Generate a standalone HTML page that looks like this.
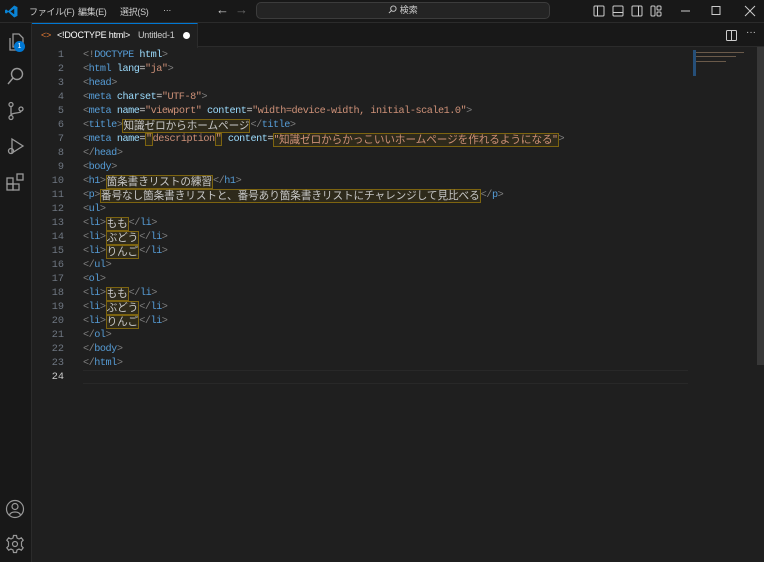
<!DOCTYPE html>
<html><head><meta charset="utf-8"><style>
*{margin:0;padding:0;box-sizing:border-box}
body{width:764px;height:562px;background:#1f1f1f;position:relative;overflow:hidden;font-family:"Liberation Sans","Noto Sans CJK JP",sans-serif;color:#ccc}
.tb{position:absolute;left:0;top:0;width:764px;height:23px;background:#181818;border-bottom:1px solid #2b2b2b}
.menu{position:absolute;top:5px;font-size:9px;color:#ccc;letter-spacing:-0.3px}
.search{position:absolute;left:256px;top:2px;width:294px;height:17px;border:1px solid #3c3c3c;border-radius:5px;background:#242424;font-size:9px;color:#ccc;text-align:center;line-height:15px}
.ab{position:absolute;left:0;top:23px;width:32px;height:539px;background:#181818;border-right:1px solid #2b2b2b}
.tabs{position:absolute;left:32px;top:23px;width:732px;height:24px;background:#181818;border-bottom:1px solid #2b2b2b}
.tab{position:absolute;left:0;top:0;width:166px;height:25px;background:#1f1f1f;border-top:1px solid #0078d4;border-right:1px solid #2b2b2b;font-size:9px;line-height:23px;color:#fff;letter-spacing:-0.2px}
.code{position:absolute;left:0;top:49px;font-family:"Liberation Mono","Noto Sans CJK JP",monospace;font-size:10.2px;letter-spacing:-0.48px}
.l{height:14px;line-height:14px;white-space:pre;position:relative}
.n{position:absolute;left:32px;width:32px;text-align:right;color:#6e7681;letter-spacing:0}
.c{position:absolute;left:83px;color:#d4d4d4}
.g{color:#808080}.t{color:#569cd6}.a{color:#9cdcfe}.s{color:#ce9178}
.j{font-size:10.6px;letter-spacing:-0.05px;font-family:"Noto Sans CJK JP",sans-serif;display:inline-block;line-height:12px;border:1px solid #7d6410;background:rgba(100,80,15,.22);vertical-align:top;color:#c8c8c8}
.js{color:#ce9178}
.q{border:1px solid #7d6410;background:rgba(100,80,15,.22)}
</style></head><body>
<div class="tb">
<svg style="position:absolute;left:5px;top:5px" width="13" height="13" viewBox="0 0 24 24"><path d="M17 1 L23 4 V20 L17 23 L6 13 L2 16 L0 14 V10 L2 8 L6 11 Z M17 7 L10 12 L17 17 Z" fill="#0a84d6"/></svg>
<span class="menu" style="left:29px">ファイル(F)</span>
<span class="menu" style="left:78px">編集(E)</span>
<span class="menu" style="left:120px">選択(S)</span>
<span class="menu" style="left:163px">···</span>
<span class="menu" style="left:216px;top:2px;font-size:13px">←</span>
<span class="menu" style="left:235px;top:2px;font-size:13px;color:#666">→</span>
<div class="search"><svg width="9" height="9" viewBox="0 0 10 10" style="vertical-align:-1px"><circle cx="6" cy="4" r="3" stroke="#ccc" fill="none"/><path d="M4 6 L1 9" stroke="#ccc"/></svg> 検索</div>
<svg style="position:absolute;left:593px;top:5px" width="70" height="12" viewBox="0 0 70 12" fill="none" stroke="#ccc"><rect x="1" y="1" width="10" height="10" rx="1"/><path d="M4.5 1V11"/><rect x="20" y="1" width="10" height="10" rx="1"/><path d="M20 7.5H30"/><rect x="39" y="1" width="10" height="10" rx="1"/><path d="M45.5 1V11"/><rect x="58" y="1" width="4" height="10" rx="1"/><rect x="64" y="1" width="4" height="4" rx="1"/><rect x="64" y="7" width="4" height="4" rx="1"/></svg>
<svg style="position:absolute;left:680px;top:5px" width="80" height="12" viewBox="0 0 80 12" fill="none" stroke="#ccc"><path d="M1 6H10"/><rect x="32" y="1.5" width="8" height="8"/><path d="M65 1L75 11M75 1L65 11"/></svg>
</div>
<div class="ab">
<svg style="position:absolute;left:6px;top:9px" width="20" height="20" viewBox="0 0 20 20" fill="none" stroke="#999" stroke-width="1.3"><path d="M7 2H13L17 6V15H7Z"/><path d="M4 6V18H13"/></svg>
<div style="position:absolute;left:14px;top:18px;width:11px;height:11px;border-radius:50%;background:#0078d4;color:#fff;font-size:7px;text-align:center;line-height:11px">1</div>
<svg style="position:absolute;left:6px;top:43px" width="20" height="20" viewBox="0 0 20 20" fill="none" stroke="#999" stroke-width="1.4"><circle cx="11" cy="8" r="5.5"/><path d="M7 12L2 18"/></svg>
<svg style="position:absolute;left:6px;top:78px" width="20" height="20" viewBox="0 0 20 20" fill="none" stroke="#999" stroke-width="1.3"><circle cx="5" cy="3.5" r="2"/><circle cx="5" cy="16.5" r="2"/><circle cx="15" cy="8" r="2"/><path d="M5 5.5V14.5M15 10C15 13 5 11 5 14.5"/></svg>
<svg style="position:absolute;left:6px;top:113px" width="20" height="20" viewBox="0 0 20 20" fill="none" stroke="#999" stroke-width="1.3"><path d="M6 3L17 10L6 17Z"/><circle cx="5" cy="15" r="2.5"/></svg>
<svg style="position:absolute;left:6px;top:149px" width="20" height="20" viewBox="0 0 20 20" fill="none" stroke="#999" stroke-width="1.3"><rect x="1" y="6" width="6" height="6"/><rect x="1" y="12" width="6" height="6"/><rect x="7" y="12" width="6" height="6"/><rect x="11" y="2" width="6" height="6"/></svg>
<svg style="position:absolute;left:5px;top:476px" width="20" height="20" viewBox="0 0 20 20" fill="none" stroke="#999" stroke-width="1.2"><circle cx="10" cy="10" r="8.5"/><circle cx="10" cy="7.5" r="3"/><path d="M4.5 16C6 12 14 12 15.5 16"/></svg>
<svg style="position:absolute;left:5px;top:511px" width="20" height="20" viewBox="0 0 20 20" fill="none" stroke="#999" stroke-width="1.2"><path d="M8.5 1.5H11.5L12 4L14 5L16.3 3.8L18.2 6.2L16.5 8L16.5 12L18.2 13.8L16.3 16.2L14 15L12 16L11.5 18.5H8.5L8 16L6 15L3.7 16.2L1.8 13.8L3.5 12V8L1.8 6.2L3.7 3.8L6 5L8 4Z"/><circle cx="10" cy="10" r="2.5"/></svg>
</div>
<div class="tabs">
<div class="tab"><span style="position:absolute;left:9px;color:#e37933;font-size:9px">&lt;&gt;</span><span style="position:absolute;left:25px">&lt;!DOCTYPE html&gt;</span><span style="position:absolute;left:106px;color:#ccc">Untitled-1</span><span style="position:absolute;left:151px;top:8px;width:7px;height:7px;border-radius:50%;background:#fff"></span></div>
<svg style="position:absolute;left:694px;top:7px" width="11" height="11" viewBox="0 0 11 11" fill="none" stroke="#ccc"><rect x="0.5" y="0.5" width="10" height="10" rx="1"/><path d="M5.5 0.5V10.5"/></svg>
<span style="position:absolute;left:714px;top:4px;font-size:10px;color:#ccc">···</span>
</div>
<div style="position:absolute;left:83px;top:370px;width:605px;height:14px;border-top:1px solid #282828;border-bottom:1px solid #282828"></div>
<div style="position:absolute;left:757px;top:47px;width:7px;height:318px;background:#383838"></div>
<div style="position:absolute;left:693px;top:50px;width:3px;height:26px;background:#264f78"></div>
<div style="position:absolute;left:696px;top:52px;width:48px;height:1px;background:#6a5a4a"></div>
<div style="position:absolute;left:696px;top:56px;width:40px;height:1px;background:#6a5a4a"></div>
<div style="position:absolute;left:696px;top:61px;width:30px;height:1px;background:#6a5a4a"></div>
<div class="code">
<div class="l"><span class="n">1</span><span class="c"><span class="g">&lt;!</span><span class="t">DOCTYPE</span> <span class="a">html</span><span class="g">&gt;</span></span></div>
<div class="l"><span class="n">2</span><span class="c"><span class="g">&lt;</span><span class="t">html</span> <span class="a">lang</span>=<span class="s">"ja"</span><span class="g">&gt;</span></span></div>
<div class="l"><span class="n">3</span><span class="c"><span class="g">&lt;</span><span class="t">head</span><span class="g">&gt;</span></span></div>
<div class="l"><span class="n">4</span><span class="c"><span class="g">&lt;</span><span class="t">meta</span> <span class="a">charset</span>=<span class="s">"UTF-8"</span><span class="g">&gt;</span></span></div>
<div class="l"><span class="n">5</span><span class="c"><span class="g">&lt;</span><span class="t">meta</span> <span class="a">name</span>=<span class="s">"viewport"</span> <span class="a">content</span>=<span class="s">"width=device-width, initial-scale1.0"</span><span class="g">&gt;</span></span></div>
<div class="l"><span class="n">6</span><span class="c"><span class="g">&lt;</span><span class="t">title</span><span class="g">&gt;</span><span class="j">知識ゼロからホームページ</span><span class="g">&lt;/</span><span class="t">title</span><span class="g">&gt;</span></span></div>
<div class="l"><span class="n">7</span><span class="c"><span class="g">&lt;</span><span class="t">meta</span> <span class="a">name</span>=<span class="s"><span class="q">"</span>description<span class="q">"</span></span> <span class="a">content</span>=<span class="j js">"知識ゼロからかっこいいホームページを作れるようになる"</span><span class="g">&gt;</span></span></div>
<div class="l"><span class="n">8</span><span class="c"><span class="g">&lt;/</span><span class="t">head</span><span class="g">&gt;</span></span></div>
<div class="l"><span class="n">9</span><span class="c"><span class="g">&lt;</span><span class="t">body</span><span class="g">&gt;</span></span></div>
<div class="l"><span class="n">10</span><span class="c"><span class="g">&lt;</span><span class="t">h1</span><span class="g">&gt;</span><span class="j">箇条書きリストの練習</span><span class="g">&lt;/</span><span class="t">h1</span><span class="g">&gt;</span></span></div>
<div class="l"><span class="n">11</span><span class="c"><span class="g">&lt;</span><span class="t">p</span><span class="g">&gt;</span><span class="j">番号なし箇条書きリストと、番号あり箇条書きリストにチャレンジして見比べる</span><span class="g">&lt;/</span><span class="t">p</span><span class="g">&gt;</span></span></div>
<div class="l"><span class="n">12</span><span class="c"><span class="g">&lt;</span><span class="t">ul</span><span class="g">&gt;</span></span></div>
<div class="l"><span class="n">13</span><span class="c"><span class="g">&lt;</span><span class="t">li</span><span class="g">&gt;</span><span class="j">もも</span><span class="g">&lt;/</span><span class="t">li</span><span class="g">&gt;</span></span></div>
<div class="l"><span class="n">14</span><span class="c"><span class="g">&lt;</span><span class="t">li</span><span class="g">&gt;</span><span class="j">ぶどう</span><span class="g">&lt;/</span><span class="t">li</span><span class="g">&gt;</span></span></div>
<div class="l"><span class="n">15</span><span class="c"><span class="g">&lt;</span><span class="t">li</span><span class="g">&gt;</span><span class="j">りんご</span><span class="g">&lt;/</span><span class="t">li</span><span class="g">&gt;</span></span></div>
<div class="l"><span class="n">16</span><span class="c"><span class="g">&lt;/</span><span class="t">ul</span><span class="g">&gt;</span></span></div>
<div class="l"><span class="n">17</span><span class="c"><span class="g">&lt;</span><span class="t">ol</span><span class="g">&gt;</span></span></div>
<div class="l"><span class="n">18</span><span class="c"><span class="g">&lt;</span><span class="t">li</span><span class="g">&gt;</span><span class="j">もも</span><span class="g">&lt;/</span><span class="t">li</span><span class="g">&gt;</span></span></div>
<div class="l"><span class="n">19</span><span class="c"><span class="g">&lt;</span><span class="t">li</span><span class="g">&gt;</span><span class="j">ぶどう</span><span class="g">&lt;/</span><span class="t">li</span><span class="g">&gt;</span></span></div>
<div class="l"><span class="n">20</span><span class="c"><span class="g">&lt;</span><span class="t">li</span><span class="g">&gt;</span><span class="j">りんご</span><span class="g">&lt;/</span><span class="t">li</span><span class="g">&gt;</span></span></div>
<div class="l"><span class="n">21</span><span class="c"><span class="g">&lt;/</span><span class="t">ol</span><span class="g">&gt;</span></span></div>
<div class="l"><span class="n">22</span><span class="c"><span class="g">&lt;/</span><span class="t">body</span><span class="g">&gt;</span></span></div>
<div class="l"><span class="n">23</span><span class="c"><span class="g">&lt;/</span><span class="t">html</span><span class="g">&gt;</span></span></div>
<div class="l"><span class="n" style="color:#ccc">24</span></div>
</div>
</body></html>
